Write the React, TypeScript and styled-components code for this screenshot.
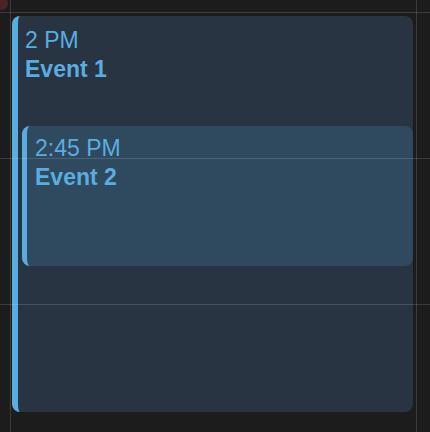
import React from "react";
import styled, { createGlobalStyle } from "styled-components";

const GlobalStyle = createGlobalStyle`
  html, body {
    margin: 0;
    padding: 0;
    background: #1c1c1d;
  }
  body {
    font-family: "Liberation Sans", Arial, sans-serif;
  }
`;

interface CalendarEvent {
  id: string;
  time: string;
  title: string;
  top: number;
  height: number;
  indent: number;
}

const events: CalendarEvent[] = [
  { id: "e1", time: "2 PM", title: "Event 1", top: 16, height: 396, indent: 0 },
  { id: "e2", time: "2:45 PM", title: "Event 2", top: 126, height: 140, indent: 10 },
];

const DayColumn = styled.div`
  position: relative;
  width: 430px;
  height: 432px;
  overflow: hidden;
  background: #1c1c1d;
`;

const NowDot = styled.div`
  position: absolute;
  left: -5px;
  top: -3px;
  width: 13px;
  height: 13px;
  border-radius: 50%;
  background: #4a2326;
`;

const EventCard = styled.div<{ $nested?: boolean }>`
  position: absolute;
  right: 17px;
  box-sizing: border-box;
  display: flex;
  flex-direction: column;
  border-radius: 8px;
  border-left: ${(p) => (p.$nested ? "5px" : "6px")} solid #5aade0;
  background: ${(p) => (p.$nested ? "#2f495e" : "#283441")};
  padding: ${(p) => (p.$nested ? "8px 8px" : "10px 7px")};
  color: #5aade0;
`;

const EventTime = styled.span`
  font-size: 23px;
  line-height: 29px;
  font-weight: 400;
`;

const EventTitle = styled.span`
  font-size: 23px;
  line-height: 29px;
  font-weight: 700;
`;

// hour rules every 146px and the two column edges, drawn above the events
const GridOverlay = styled.div`
  position: absolute;
  inset: 0;
  pointer-events: none;
  background:
    linear-gradient(90deg, transparent 10px, rgba(255, 255, 255, 0.14) 10px, rgba(255, 255, 255, 0.14) 11px, transparent 11px),
    linear-gradient(90deg, transparent 416px, rgba(255, 255, 255, 0.14) 416px, rgba(255, 255, 255, 0.14) 417px, transparent 417px),
    repeating-linear-gradient(
      180deg,
      transparent 0,
      transparent 12px,
      rgba(255, 255, 255, 0.14) 12px,
      rgba(255, 255, 255, 0.14) 13px,
      transparent 13px,
      transparent 146px
    );
`;

export default function App() {
  return (
    <>
      <GlobalStyle />
      <DayColumn>
        <NowDot />
        {events.map((ev) => (
          <EventCard
            key={ev.id}
            $nested={ev.indent > 0}
            style={{ top: ev.top, height: ev.height, left: 12 + ev.indent }}
          >
            <EventTime>{ev.time}</EventTime>
            <EventTitle>{ev.title}</EventTitle>
          </EventCard>
        ))}
        <GridOverlay />
      </DayColumn>
    </>
  );
}
